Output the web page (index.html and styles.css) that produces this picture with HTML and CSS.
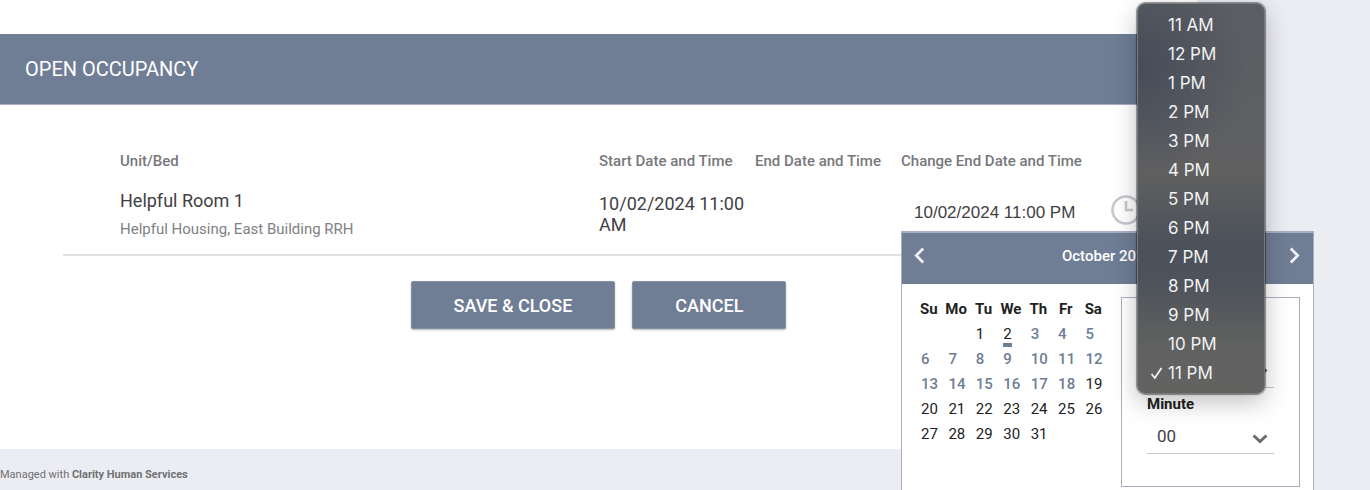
FILE: index.html
```html
<!DOCTYPE html>
<html lang="en">
<head>
<meta charset="utf-8">
<meta name="viewport" content="width=device-width, initial-scale=1">
<title>Open Occupancy</title>
<link rel="stylesheet" href="styles.css">
</head>
<body>
<div class="page">
  <main class="sheet">
    <h1 class="sheet-title">OPEN OCCUPANCY</h1>
    <form class="occupancy">
      <table class="units">
        <thead>
          <tr>
            <th class="col-unit" scope="col">Unit/Bed</th>
            <th class="col-start" scope="col">Start Date and Time</th>
            <th class="col-end" scope="col">End Date and Time</th>
            <th class="col-change" scope="col"><label for="change-end">Change End Date and Time</label></th>
          </tr>
        </thead>
        <tbody>
          <tr>
            <td class="col-unit">
              <div class="unit-name">Helpful Room 1</div>
              <div class="unit-site">Helpful Housing, East Building RRH</div>
            </td>
            <td class="start-value">10/02/2024 11:00 AM</td>
            <td></td>
            <td class="change-cell">
              <div class="date-field">
                <input class="date-input" id="change-end" type="text" value="10/02/2024 11:00 PM">
                <svg class="clock" viewBox="0 0 30 30" aria-hidden="true"><circle cx="15" cy="15" r="13.5"/><path d="M15 6v9h7"/></svg>
              </div>
              <div class="picker">
                <div class="picker-head">
                  <button class="nav" type="button" aria-label="Previous month"><svg viewBox="0 0 10 16"><path d="M8.500 1.500L2 8l6.500 6.500"/></svg></button>
                  <span class="month">October 2024</span>
                  <button class="nav" type="button" aria-label="Next month"><svg viewBox="0 0 10 16"><path d="M1.500 1.500L8 8l-6.500 6.500"/></svg></button>
                </div>
                <div class="picker-body">
                  <table class="days">
                    <thead><tr><th>Su</th><th>Mo</th><th>Tu</th><th>We</th><th>Th</th><th>Fr</th><th>Sa</th></tr></thead>
                    <tbody>
                      <tr><td></td><td></td><td>1</td><td class="picked"><span>2</span></td><td class="open">3</td><td class="open">4</td><td class="open">5</td></tr>
                      <tr class="open"><td>6</td><td>7</td><td>8</td><td>9</td><td>10</td><td>11</td><td>12</td></tr>
                      <tr><td class="open">13</td><td class="open">14</td><td class="open">15</td><td class="open">16</td><td class="open">17</td><td class="open">18</td><td>19</td></tr>
                      <tr><td>20</td><td>21</td><td>22</td><td>23</td><td>24</td><td>25</td><td>26</td></tr>
                      <tr><td>27</td><td>28</td><td>29</td><td>30</td><td>31</td><td></td><td></td></tr>
                    </tbody>
                  </table>
                  <div class="time">
                    <div class="select-box">
                      <select class="select" aria-label="Hour"><option>11 PM</option></select>
                      <svg class="chevron" viewBox="0 0 16 10" aria-hidden="true"><path d="M1.500 1.500L8 7.500l6.500-6"/></svg>
                      <ul class="menu" role="listbox" aria-label="Hour">
                        <li role="option">11 AM</li>
                        <li role="option">12 PM</li>
                        <li role="option">1 PM</li>
                        <li role="option">2 PM</li>
                        <li role="option">3 PM</li>
                        <li role="option">4 PM</li>
                        <li role="option">5 PM</li>
                        <li role="option">6 PM</li>
                        <li role="option">7 PM</li>
                        <li role="option">8 PM</li>
                        <li role="option">9 PM</li>
                        <li role="option">10 PM</li>
                        <li role="option" aria-selected="true"><svg class="check" viewBox="0 0 12 12" aria-hidden="true"><path d="M1 7l3.300 4L11 1"/></svg>11 PM</li>
                      </ul>
                    </div>
                    <label class="time-label" for="minute">Minute</label>
                    <div class="select-box">
                      <select class="select" id="minute"><option>00</option></select>
                      <svg class="chevron" viewBox="0 0 16 10" aria-hidden="true"><path d="M1.500 1.500L8 7.500l6.500-6"/></svg>
                    </div>
                  </div>
                </div>
              </div>
            </td>
          </tr>
        </tbody>
      </table>
      <div class="actions">
        <button class="btn" type="submit">SAVE &amp; CLOSE</button>
        <button class="btn" type="button">CANCEL</button>
      </div>
    </form>
  </main>
  <footer class="footer">Managed with <b>Clarity Human Services</b></footer>
</div>
</body>
</html>
```
FILE: styles.css
```css
* { box-sizing: border-box; }
body { margin: 0; font-family: Roboto, "Liberation Sans", sans-serif; color: #3f4045; }
.page { min-height: 100vh; overflow: hidden; background: #ecedf3; }

.sheet { margin-right: 173px; padding: 34px 0 120px; background: #fff; }
.sheet-title {
  margin: 0; padding: 0 25px;
  border-bottom: 1px solid #a7afbd;
  background: #6f7d95; color: #fff;
  font-size: 20px; font-weight: 400; line-height: 70px;
}
.occupancy { padding: 45px 63px 0; }

.units { width: 100%; border-collapse: collapse; table-layout: fixed; }
.units th, .units td { padding: 0; text-align: left; vertical-align: top; }
.units > tbody > tr { border-bottom: 2px solid #e1e1e3; }
.units > thead th { font-size: 15px; font-weight: 500; line-height: 22px; color: #77787c; white-space: nowrap; }
.units .col-unit { padding-left: 57px; }
.col-start { width: 156px; }
.col-end { width: 146px; }
.col-change { width: 233px; }
.unit-name { padding-top: 17px; font-size: 18px; line-height: 24px; }
.unit-site { padding: 5px 0 14px; font-size: 15px; line-height: 22px; color: #808185; }
.units .start-value { padding: 21px 6px 0 0; font-size: 18px; line-height: 21px; }

.units .change-cell { position: relative; }
.date-field { display: flex; align-items: center; gap: 16px; padding-top: 20px; }
.date-input {
  width: 194px; height: 36px; padding: 6px 13px 0;
  border: 0; background: transparent; color: #3f4045;
  font: 17px "Liberation Sans", sans-serif;
}
.clock { flex: none; width: 30px; height: 30px; fill: none; stroke: #c5c8cf; stroke-width: 2.6; }

.picker {
  position: absolute; top: 59px; left: 0; z-index: 2;
  width: 413px; min-height: 280px;
  border: 1px solid #a9afbf; border-top: 2px solid #a9afbf; background: #fff;
  color: #222;
}
.picker-head { display: flex; justify-content: space-between; min-height: 51px; padding: 0 11px; background: #6f7d95; color: #fff; }
.month { font-size: 15px; font-weight: 500; line-height: 46px; }
.nav { width: 14px; height: 45px; padding: 0 1px; border: 0; background: none; }
.nav svg { display: block; width: 11px; height: 17px; fill: none; stroke: #eef0f4; stroke-width: 2.6; }
.picker-body { display: flex; align-items: flex-start; justify-content: space-between; padding: 13px 13px 0; }

.days { border-collapse: collapse; table-layout: fixed; width: 192px; font-size: 15px; }
.units .days th { height: 25px; padding: 0; text-align: center; font-size: 15px; font-weight: 700; line-height: 25px; color: #222; }
.units .days td { height: 25px; padding: 0 0 0 6px; line-height: 25px; }
.days .open { color: #6f7d95; font-weight: 500; }
.days .picked span { display: inline-block; height: 25px; border-bottom: 4px solid #6f7d95; line-height: 25px; }

.time { width: 179px; height: 190px; padding: 57px 25px 0; border: 1px solid #a9afbf; }
.select-box { position: relative; display: flex; align-items: center; border-bottom: 1px solid #c8c8cc; }
.select {
  width: 100%; height: 32px; padding: 0 10px 2px;
  appearance: none; border: 0; background: transparent; color: #3f4045;
  font: 17px Roboto, sans-serif;
}
.chevron { position: absolute; top: 13px; right: 6px; width: 16px; height: 10px; fill: none; stroke: #6b6c70; stroke-width: 3; pointer-events: none; }
.time-label { display: block; font-size: 15px; font-weight: 700; line-height: 33px; }

.menu {
  position: absolute; bottom: -7px; left: -10px; z-index: 3;
  width: 128px; margin: 0; padding: 7px 0 5px;
  border: 1px solid #77787a; border-radius: 8px;
  background:
    radial-gradient(ellipse 110px 110px at 0 62px, #454c59, transparent),
    linear-gradient(#5b5e63, #5e5f62 35%, #606060 43%, #4b515a 62%, #4d535b 71%, #606160 88%, #626361);
  box-shadow: 0 0 1px 1px rgba(0, 0, 0, .4), 0 8px 24px rgba(0, 0, 0, .25);
  color: #f1f1f2; font: 17px/29px Inter, sans-serif; list-style: none;
}
.menu li { position: relative; padding-left: 30px; }
.check { position: absolute; top: 8px; left: 12px; width: 13px; height: 12px; fill: none; stroke: #f1f1f2; stroke-width: 1.8; }

.actions { display: flex; justify-content: center; gap: 17px; padding-top: 25px; }
.btn {
  height: 48px; padding: 0 42px;
  border: 1px solid #8490a4; border-radius: 2px;
  background: #6f7d95; color: #fff; box-shadow: 0 1px 2px rgba(0, 0, 0, .3);
  font: 500 18px Roboto, sans-serif;
}
.footer { padding: 16px 0 5px; font-size: 11px; line-height: 20px; color: #707174; }
```
